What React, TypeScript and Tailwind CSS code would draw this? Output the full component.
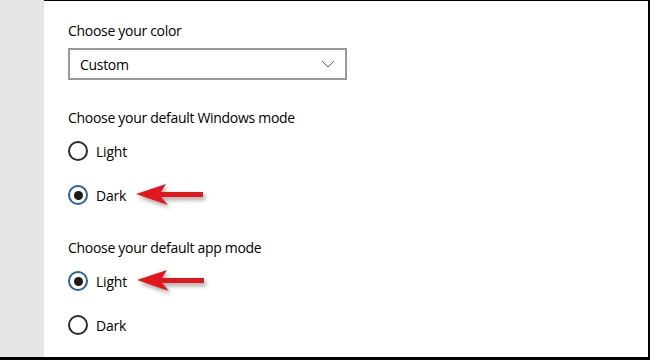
const font = { fontFamily: '"Open Sans", "Noto Sans", sans-serif' };

function Radio({ checked }: { checked?: boolean }) {
  return checked ? (
    <span className="flex h-5 w-5 items-center justify-center rounded-full border-2 border-[#2d5cab]">
      <span className="h-[9px] w-[9px] rounded-full bg-[#1a1a1a]" />
    </span>
  ) : (
    <span className="h-5 w-5 rounded-full border-2 border-[#2a2a2a]" />
  );
}

function Arrow() {
  return (
    <svg
      width="70"
      height="24"
      viewBox="0 0 70 24"
      className="ml-[10px] drop-shadow-[2px_3px_2px_rgba(0,0,0,0.35)]"
    >
      <path d="M0 11 L30 1 L25 9 L67 9 L67 14 L25 14 L32 22 Z" fill="#e3161d" />
    </svg>
  );
}

function Option({ label, checked, arrow }: { label: string; checked?: boolean; arrow?: boolean }) {
  return (
    <div className="flex h-6 items-center">
      <Radio checked={checked} />
      <span className="ml-2 text-[14px] tracking-[-0.2px] text-black">{label}</span>
      {arrow && <Arrow />}
    </div>
  );
}

export default function App() {
  return (
    <div className="flex h-[360px] w-[650px] bg-white" style={font}>
      {/* left rail */}
      <div className="w-[44px] shrink-0 border-b-[3px] border-black bg-[#e6e6e6]" />

      {/* settings panel */}
      <div className="flex-1 border-t border-r-2 border-b-[3px] border-black pl-6 pt-5 tracking-[-0.3px]">
        <div className="leading-5 text-[14px] text-black">Choose your color</div>
        <div className="mt-[7px] flex h-8 w-[279px] items-center justify-between border-2 border-[#999999] pl-[10px] pr-[10px]">
          <span className="text-[14px] text-black">Custom</span>
          <svg width="14" height="8" viewBox="0 0 14 8">
            <polyline points="1,1 7,7 13,1" fill="none" stroke="#555" strokeWidth="1" />
          </svg>
        </div>

        <div className="mt-7 leading-5 text-[14px] text-black">Choose your default Windows mode</div>
        <div className="mt-[11px] flex flex-col gap-5">
          <Option label="Light" />
          <Option label="Dark" checked arrow />
        </div>

        <div className="mt-[31px] leading-5 text-[14px] text-black">Choose your default app mode</div>
        <div className="mt-[11px] flex flex-col gap-5">
          <Option label="Light" checked arrow />
          <Option label="Dark" />
        </div>
      </div>
    </div>
  );
}
